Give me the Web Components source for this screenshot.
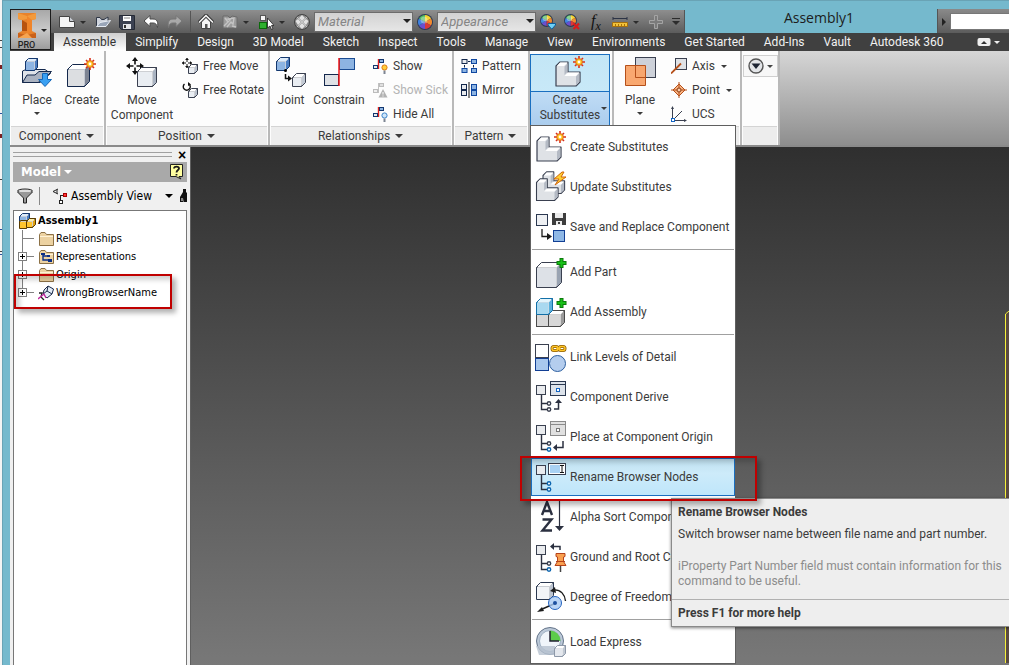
<!DOCTYPE html>
<html lang="en">
<head>
<meta charset="utf-8">
<title>Assembly1</title>
<style>
  html, body { margin: 0; height: 100%; overflow: hidden; }
  body { font: 12px/16px Roboto, "Open Sans", sans-serif; color: #3b3b3b; background: #f4f4f4; }
</style>
</head>
<body>
<cad-window></cad-window>

<script>
/* ---------- icon set ---------- */
const cube = (x, y, s, d, f = '#d9dce0', t = '#fff', r = '#9aa1ac', k = '#3a4050') =>
  `<g stroke="${k}" stroke-linejoin="round"><path fill="${t}" d="M${x} ${y + d}l${d} ${-d}h${s}l${-d} ${d}z"/><path fill="${r}" d="M${x + s} ${y + d}l${d} ${-d}v${s}l${-d} ${d}z"/><path fill="${f}" d="M${x} ${y + d}h${s}v${s}h${-s}z"/></g><path d="M${x + 1} ${y + d}h${s - 1}v${s - 1}M${x + s} ${y + d}l${d - 1} ${1 - d}" fill="none" stroke="#fff" stroke-opacity=".75"/>`;
const box = (x, y, w, h, f = '#e9ebee', k = '#3a4050') => `<rect x="${x}" y="${y}" width="${w}" height="${h}" fill="${f}" stroke="${k}"/>`;
const spark = (x, y) => `<g transform="translate(${x} ${y})"><path d="M0-6V6M-6 0H6M-4-4L4 4M-4 4L4-4" stroke="#d8301c" stroke-width="1.6"/><circle r="3.4" fill="#ffc81e" stroke="#e0641c"/><circle r="1.4" fill="#fff"/></g>`;
const ell = (x, y, s = 1) => `<g transform="translate(${x} ${y}) scale(${s})" stroke-linejoin="round"><path fill="#dfe2e6" stroke="#3a4050" stroke-width="1.2" d="M0 5L4 1H12V11L12 11H24V21L20 25H0z"/><path fill="#fff" d="M1 5L4 1.600H11.500L8 5zM8.500 15L12 11.600H23.300L20 15z"/><path fill="#b4bac4" d="M8.500 5.500L11.500 2.500V10.800L8.500 14zM20 15.500L23.400 12V21L20 24.400z"/></g>`;
const plus = `<path d="M26.500 2V12M21.500 7H31.500" stroke="#0b7a0b" stroke-width="4"/><path d="M26.500 3V11M22.500 7H30.500" stroke="#18c018" stroke-width="2"/>`;
const treeArms = (a = '#0d66b0', b = '#0d66b0') => `${box(1.5, 4.5, 9, 9)}<path d="M6.500 14V28.500H12M6.500 22.500H12" fill="none" stroke="#2b3040" stroke-width="1.4"/><circle cx="14" cy="22.500" r="1.700" fill="#fff" stroke="${a}" stroke-width="1.4"/><circle cx="14" cy="28.500" r="1.700" fill="#fff" stroke="${b}" stroke-width="1.4"/>`;
const wheel = (x, y, r) => {
  const c = ['#f6d32d', '#f28a2e', '#d93a3a', '#6a4fd0', '#3f83e0', '#4cb85c'];
  return `<circle cx="${x}" cy="${y}" r="${r + 1}" fill="#2c3a55"/>` + c.map((k, i) => {
    const a = (i * 60 - 90) * Math.PI / 180, b = a + Math.PI / 3;
    return `<path fill="${k}" d="M${x} ${y}L${(x + r * Math.cos(a)).toFixed(2)} ${(y + r * Math.sin(a)).toFixed(2)}A${r} ${r} 0 0 1 ${(x + r * Math.cos(b)).toFixed(2)} ${(y + r * Math.sin(b)).toFixed(2)}z"/>`;
  }).join('') + `<circle cx="${x - 1}" cy="${y - 2}" r="${r / 2}" fill="#fff" opacity=".35"/>`;
};
const blueCube = (x, y, s, d) => cube(x, y, s, d, '#8db4e2', '#dcebfa', '#4a7cc0', '#14386f');
const folder = `<path d="M1.500 14.500V3.500L3 1.500H7L8.500 3.500H15.500V14.500z" fill="#ecd2a2" stroke="#8c7146"/><path d="M2 5.500H15" stroke="#fff2d6"/>`;
const rel = (b) => `<path d="M6.500 1V11" stroke="#e0201c" stroke-width="1.4"/>${box(7.5, 1.5, 4, 3, '#8db4e2', '#14386f')}${box(1.5, 7.5, 4, 3, '#e9ebee', '#14386f')}${b}`;
const bulb = (c, k) => `<circle cx="12.500" cy="9.500" r="2.600" fill="${c}" stroke="${k}"/><path d="M12.500 12.500V16" stroke="#7d8592" stroke-width="2"/>`;
const ICONS = {
  logo: [26, 30, `<path d="M4 2H22V8L18 9V20L22 22V27H4V22L8 20V9L4 8z" fill="#e8822a"/><path d="M4 2L13 5 22 2V8L18 9 13 8 8 9 4 8z" fill="#f39a3c"/><path d="M8 9L13 12V20L8 20z" fill="#b8530f"/><path d="M13 5L18 9V20L13 23z" fill="#f0852a"/><path d="M4 22L13 24 22 22V27H4z" fill="#c9611a"/><path d="M4 27L13 22 18 27z" fill="#f7a550"/>`],
  new: [16, 16, `<path d="M.500 2.500H10.500L15.500 7.500V13.500H.500z" fill="#f4f4f4" stroke="#444"/><path d="M10.500 2.500V7.500H15.500" fill="#c8ccd2" stroke="#444"/>`],
  open: [16, 16, `<path d="M1.500 12.500V3.500H5L6.500 5.500H9L13 3V7" fill="#cfd4dc" stroke="#2f3746"/><path d="M1.500 12.500L5 8.500 15.500 6.500 11 12.500z" fill="#9aa6b8" stroke="#e8edf3"/>`],
  save: [16, 16, `<path d="M.500 1.500H15.500V15.500H2.500L.500 13.500z" fill="#3c4252" stroke="#252a35"/><path d="M4 2H12V7H4z" fill="#fff"/><path d="M4 10H12V15H4z" fill="#e4e6ea"/><path d="M5 11H7V14H5z" fill="#333"/><path d="M5 4H11" stroke="#888"/>`],
  undo: [16, 16, `<path d="M1 7L7 1.500V5H10C14 5 15.500 8 14.500 13.500 13.500 10 12.500 9 10 9H7V12.500z" fill="#fff" stroke="#4a4a4a"/>`],
  redo: [16, 16, `<path d="M15 7L9 1.500V5H6C2 5 .500 8 1.500 13.500 2.500 10 3.500 9 6 9H9V12.500z" fill="#a9a9a9" stroke="#777"/>`],
  home: [16, 16, `<path d="M3.500 8V14.500H12.500V8L8 3.500z" fill="#f4f4f4" stroke="#444"/><path d="M.500 8.500L8 1 15.500 8.500" fill="none" stroke="#3a3a3a" stroke-width="3"/><path d="M1 8.500L8 1.500 15 8.500" fill="none" stroke="#fff" stroke-width="1.4"/><path d="M7 10H9.500V14H7z" fill="#555"/>`],
  update: [16, 16, `<path d="M1 2H6L8 4 10 2 15 3V14H1z" fill="#9c9c9c" stroke="#6b6b6b"/><path d="M2 12L8 6 6 5 12 4 11 10 9 8 5 13M3 4L6 8M10 12L14 13" fill="none" stroke="#c4c4c4" stroke-width="1.400"/>`],
  select: [16, 16, `${box(2.5, 1.5, 5, 5, '#f4f4f4', '#555')}${box(1.500, 8.500, 7, 6, '#30b030', '#0a6a0a')}<path d="M9.500 4V14L12 12 13.500 15.500 15 15 13.500 11.500H16z" fill="#fff" stroke="#222" stroke-width=".800"/>`],
  sphere: [16, 16, `<circle cx="8" cy="8" r="7.500" fill="#8a8a8a" stroke="#444"/><path d="M8 1L11 4 8 7 5 4zM8 9L11 12 8 15 5 12zM1.500 7L4 5 7 8 4 11zM14.500 7L12 5 9 8 12 11z" fill="#e2e2e2"/><path d="M3 3L13 13M13 3L3 13" stroke="#c4c4c4"/>`],
  wheel: [16, 16, wheel(8, 8, 7)],
  wheeldown: [16, 16, wheel(6.5, 6.5, 5.5) + `<path d="M8 9.500H15.500V11L12 15H11.500L8 11z" fill="#6fd0f5" stroke="#0b5f9c"/>`],
  wheelx: [16, 16, wheel(6.5, 6.5, 5.5) + `<path d="M9.500 9.500L15 15M15 9.500L9.500 15" stroke="#d81b1b" stroke-width="2.200"/>`],
  ruler: [16, 16, `<path d="M1 3V6M15 3V6M1 4.500H15" stroke="#2c3345" fill="none"/><path d="M.500 8.500H15.500V12.500H.500z" fill="#f3c33a" stroke="#a8710c"/><path d="M3.500 10V12M6.500 10V12M9.500 10V12M12.500 10V12" stroke="#a8710c"/>`],
  cross: [16, 16, `<path d="M6.500 1.500H9.500V6.500H14.500V9.500H9.500V14.500H6.500V9.500H1.500V6.500H6.500z" fill="#7b7b7b" stroke="#a4a4a4"/>`],
  more: [8, 16, `<path d="M0 4.500H8" stroke="#2c2c2c"/><path d="M0 7H8L4 11z" fill="#2c2c2c"/>`],
  caret: [8, 16, `<path d="M1 7H7L4 10z" fill="currentColor"/>`],
  caretbig: [9, 16, `<path d="M0 6H8L4 10z" fill="currentColor"/>`],
  play: [6, 16, `<path d="M1 4L5 8 1 12z" fill="#222"/>`],
  ribmin: [14, 16, `<rect x=".500" y="4" width="13" height="8" rx="2" fill="#f0f0f0"/><path d="M4 10L7 7 10 10z" fill="#333"/>`],

  place: [32, 32, `<path d="M1.500 25.500V14L5 12.500H24L29.500 16.500 19 25.500z" fill="#dfe3e9" stroke="#14284c"/><path d="M1.500 25.500L6 18H14L18 14.500H30.500L22 23 17 25.500z" fill="#aab2c0" stroke="#14284c"/>${blueCube(4.5, 1.500, 9, 3)}<path d="M21.500 16.500H26.500V22.500H30.500L24 29.500 17.500 22.500H21.500z" fill="#3aa0f2" stroke="#1266b8"/>`],
  create: [32, 32, cube(1.5, 7.5, 17, 5, '#dcdee1', '#fff', '#7d8493', '#14284c') + spark(24, 7)],
  move: [32, 32, `<path d="M9 2V16M2 9H16" stroke="#111" stroke-width="1.6" stroke-dasharray="5.500 3"/><path d="M9 0L12 4H6zM9 18L6 14H12zM0 9L4 6V12zM18 9L14 12V6z" fill="#111"/>${cube(11.5, 10.5, 15, 4, '#e9edf2', '#fff', '#aab4c2', '#3a4050')}`],
  joint: [32, 32, blueCube(1.5, .5, 9, 4) + `<path d="M10.500 17V21.500H14" fill="none" stroke="#111" stroke-width="1.500"/><path d="M13 18.500L17 21.500 13 24.500z" fill="#111"/><circle cx="10.500" cy="13.500" r="1.500"/>${cube(17.5, 16.5, 9, 4, '#e9edf2', '#fff', '#c2c9d3', '#3a4050')}`],
  constrain: [32, 32, box(16.5, 1.5, 15, 11, '#8db4e2', '#1b4c93') + box(1.500, 17.500, 14, 11, '#dfe2e6', '#14284c') + `<path d="M16 1V29" stroke="#f01616" stroke-width="1.500"/>`],
  subst: [32, 32, ell(2, 5) + spark(25, 6)],
  plane: [32, 32, box(11.5, .5, 20, 20, '#cdd1d9', '#3a4050') + `<path d="M1.500 8.500H21.500V28.500H1.500z" fill="#f9a368" fill-opacity=".950" stroke="#b5501a"/><path d="M11.500 9V20.500H21" fill="none" stroke="#b5501a"/>`],
  freemove: [16, 16, `<path d="M5 0V10M0 5H10" stroke="#111" stroke-dasharray="4 2"/><path d="M3 2H7L5 0zM3 8H7L5 10zM2 3V7L0 5zM8 3V7L10 5z" fill="#111"/>${cube(6.5, 6.5, 6, 3, '#e9edf2', '#fff', '#b8c0cc')}`],
  freerotate: [16, 16, `<path d="M2.500 2A3.500 3.500 0 1 0 7 2" fill="none" stroke="#111" stroke-width="1.400"/><path d="M6 0L9 2.500 6 4z" fill="#111"/>${cube(6.5, 6.5, 6, 3, '#e9edf2', '#fff', '#b8c0cc')}`],
  show: [16, 16, rel(bulb('#ffce3a', '#e07a10'))],
  hide: [16, 16, rel(bulb('#cfe6fa', '#3d86cc'))],
  sick: [16, 16, `<g opacity=".9"><path d="M6.500 1V11" stroke="#bbb"/>${box(7.500, 1.500, 4, 3, '#ddd', '#b5b5b5')}${box(1.500, 7.500, 4, 3, '#eee', '#b5b5b5')}<path d="M11 7L15.500 15.500H6.500z" fill="#aaa"/><path d="M11 10V12.500M11 13.500V14.500" stroke="#fff"/></g>`],
  pattern: [16, 16, box(1, 1.5, 5, 4, '#e9ebee', '#14284c') + box(10.5, 1.5, 5, 4, '#8db4e2', '#0f47a0') + box(1, 10.5, 5, 4, '#8db4e2', '#0f47a0') + box(10.5, 10.5, 5, 4, '#8db4e2', '#0f47a0') + `<path d="M7 3.500H9.500M3.500 7V9.500M12.500 7V9.500" stroke="#14284c"/>`],
  mirror: [16, 16, box(.5, 2.5, 5, 5, '#e9ebee', '#14284c') + box(.5, 8.500, 5, 5, '#e9ebee', '#14284c') + box(10.5, 2.500, 5, 5, '#8db4e2', '#0f47a0') + box(10.5, 8.500, 5, 5, '#8db4e2', '#0f47a0') + `<path d="M8 0V16" stroke="#111"/>`],
  axis: [16, 16, box(4.5, .5, 11, 11, '#dfe2e6', '#3a4050') + `<path d="M0 15.500L10 5.500" stroke="#b5501a" stroke-width="1.800"/>`],
  point: [16, 16, `<path d="M8 2L14 8 8 14 2 8z" fill="#f9b483" stroke="#b5501a"/><path d="M8 0V16M0 8H16" stroke="#b5501a"/><circle cx="8" cy="8" r="2" fill="#f9d0b0" stroke="#8c3a10"/>`],
  ucs: [16, 16, `<path d="M1.500 1V14.500H15M1.500 14.500L11 5" fill="none" stroke="#3a4050"/><path d="M0 3L1.500 0 3 3zM13 13L16 14.500 13 16z" fill="#3a4050"/><rect x=".500" y="12.500" width="3" height="3" fill="#fff" stroke="#1566c4"/>`],
  disc: [16, 16, `<circle cx="8" cy="8" r="7" fill="#e3e5e8" stroke="#555" stroke-width="1.400"/><path d="M3.500 5.500H12.500L8 11z" fill="#1d2433"/>`],

  updsub: [32, 32, ell(8, 0, .9) + ell(1.5, 7, .9) + `<path d="M27 1L19 8H24L20 14 31 6H26L29 1z" fill="#ffcf30" stroke="#d0650c"/>`],
  savrep: [32, 32, box(1.5, 3.5, 11, 11, '#eef0f3', '#2b3850') + `<path d="M17 2H31V14H17z" fill="#3d3d3d"/><path d="M20 2H28V7H20zM21 10H27V14H21z" fill="#ececec"/><path d="M23 11H25V13H23z" fill="#3d3d3d"/><path d="M7 18V25.500H14" fill="none" stroke="#1c1c1c" stroke-width="1.300"/><path d="M12 22L17 25.500 12 29z" fill="#1c1c1c"/>${box(18.5, 19.500, 11, 11, '#8fb8e6', '#123f94')}`],
  addpart: [32, 32, cube(1.5, 6.5, 20, 5, '#dde1e7', '#fff', '#99a3b2') + plus],
  addasm: [32, 32, box(1.5, 18.5, 12, 12, '#d8d8d8', '#4a4a4a') + cube(13.500, 14.500, 12, 4, '#d8d8d8', '#fff', '#9b9b9b', '#4a4a4a') + cube(1.5, 2.500, 12, 4, '#a9d9f0', '#e4f5fc', '#5bb0dc', '#1370a8') + plus],
  lod: [32, 32, box(.5, 3.500, 13, 13, '#fff', '#3a4050') + box(.5, 17.500, 13, 12, '#a9c8ee', '#123f94') + `<circle cx="22.500" cy="22.500" r="8" fill="#b4cdee" stroke="#2d5f9f"/><g fill="none" stroke="#8f5d00" stroke-width="3"><rect x="17" y="5.500" width="6" height="4" rx="2"/><rect x="24" y="5.500" width="6" height="4" rx="2"/></g><g fill="none" stroke="#ffc629" stroke-width="1.400"><rect x="17" y="5.500" width="6" height="4" rx="2"/><rect x="24" y="5.500" width="6" height="4" rx="2"/><path d="M21 7.500H26"/></g>`],
  derive: [32, 32, treeArms('#3a4050', '#3a4050') + box(15.5, .500, 15, 14, '#dce2ea', '#2b3850') + `<path d="M15.500 3.500H30.500" stroke="#2b3850"/><rect x="21.500" y="7.500" width="3" height="3" fill="#fff" stroke="#1566c4"/><path d="M19 28H23.500V21" fill="none" stroke="#2b3040" stroke-width="1.500"/><path d="M20 22L23.500 18 27 22z" fill="#2b3040"/>`],
  origin: [32, 32, treeArms('#3a4050') + box(15.5, .500, 15, 14, '#e0e0e0', '#8a8a8a') + `<path d="M15.500 3.500H30.500" stroke="#8a8a8a"/><rect x="21.500" y="7.500" width="3" height="3" fill="#fff" stroke="#777"/><path d="M28 20V26.500H21" fill="none" stroke="#2b3040" stroke-width="1.500"/><path d="M22 23L18 26.500 22 30z" fill="#2b3040"/>`],
  rename: [32, 32, treeArms() + box(13.5, 2.500, 17, 11, '#fff', '#3a4050') + `<path d="M15 4H25V12H15z" fill="#a9d2f4"/><path d="M25 4.500H29M27 4.500V11.500M25 11.500H29" stroke="#111"/>`],
  sort: [32, 32, `<path d="M7 14L12 1 17 14M9 10H15" fill="none" stroke="#2b3040" stroke-width="2.400"/><path d="M7.500 18.500H16.500L7.500 29.500H17" fill="none" stroke="#2b3040" stroke-width="2.400"/><path d="M24.500 0V26" stroke="#2b3040" stroke-width="1.200"/><path d="M20 25H29L24.500 30z" fill="#2b3040"/>`],
  ground: [32, 32, treeArms('#3a4050') + `<path d="M25 9V5.500H18" fill="none" stroke="#2b3040" stroke-width="1.500"/><path d="M19 2L15 5.500 19 9z" fill="#2b3040"/><path d="M21 12.500H30V15.500L28.500 16V20.500L31 24.500H20L22.500 20.500V16L21 15.500z" fill="#f9a050" stroke="#b5421a"/><path d="M21 20.500H30" stroke="#b5421a"/><path d="M25.500 25V31" stroke="#444" stroke-width="1.500"/>`],
  dof: [32, 32, cube(1.500, 1.500, 13, 4, '#f2f4f7', '#fff', '#bcc4d0', '#2b3850') + `<path d="M18 9C26 8 30 14 30.500 20M21 22L5 29" fill="none" stroke="#1c1c1c" stroke-width="1.400"/><path d="M20 6L15 10 21 12zM7 26L2 31 9 30z" fill="#1c1c1c"/><circle cx="20" cy="22" r="6.500" fill="#a9cbf4" fill-opacity=".8" stroke="#2463c0"/><circle cx="20" cy="22" r="2" fill="#1c50a0"/>`],
  express: [32, 32, `<circle cx="15" cy="15" r="13.500" fill="#bcc9d8" stroke="#64748a"/><circle cx="15" cy="15" r="10.500" fill="#f0f5fa" stroke="#9fb0c3"/><path d="M15 15V4.500A10.500 10.500 0 0 1 25.500 15z" fill="#5ccc4a"/><path d="M15 5V15H24" fill="none" stroke="#223" stroke-width="1.500"/><path d="M1 20H20V29H4z" fill="#b7c2cf" opacity=".8"/>${cube(19.500, 19.500, 8, 3, '#e4e8ee', '#fff', '#c0c8d2', '#8d98a8')}`],

  help: [14, 16, `<path d="M.500 .500H12.500V12.500H9L11 15 6 12.500H.500z" fill="#ffffa0" stroke="#222"/><path d="M4 4.500C4 2 9 2 9 4.500 9 6 6.500 6 6.500 8.500M6.500 10V11.500" fill="none" stroke="#1a1a1a" stroke-width="1.800"/>`],
  funnel: [16, 16, `<ellipse cx="8" cy="3" rx="7.500" ry="2" fill="#ddd" stroke="#222"/><path d="M.500 4L6.500 10V15H9.500V10L15.500 4" fill="#999" stroke="#222"/>`],
  view: [16, 16, `<path d="M6 1L1 3.500 6 6M5 1.500V5.500" fill="none" stroke="#222"/><path d="M9 7.500H14M8.500 7V14" stroke="#222" fill="none"/>${box(11.500, 5.500, 3, 3, '#f33', '#a00')}${box(7.500, 12.500, 3, 3, '#fff', '#222')}`],
  binoc: [7, 16, `<path d="M6 1V4L7 5V14H4V10L3.500 14H0V9L3 4V1z" fill="#111"/><path d="M2 10V13" stroke="#fff"/>`],
  asm: [18, 18, blueCube(1.500, 1.500, 7, 3) + cube(1.500, 8.500, 7, 1, '#ffc52e', '#ffe08a', '#e0a010', '#5a3c00') + cube(8.500, 6.500, 6, 3, '#ffc52e', '#fff0a8', '#e0a010', '#5a3c00')],
  folder: [17, 16, folder],
  reps: [17, 16, folder + `<path d="M5 4V11H10M5 7H9" fill="none" stroke="#0b2f86" stroke-width="1.400"/><path d="M3 4H7V6H3zM9 6H12V8H9zM10 10H14V13H10z" fill="#0b2f86"/>`],
  part: [17, 16, `<path d="M6 5L10 1 15.500 4 14 9 9 13 5 9z" fill="#e3ecf6" stroke="#1b2a4a"/><path d="M10 1L9 6 14 9M9 6L5 9" fill="none" stroke="#1b2a4a"/><path d="M1 8H4L3 12 6 15" fill="none" stroke="#222" stroke-width="1.300"/><path d="M0 14L6 9 8 13" fill="none" stroke="#c22aa0" stroke-width="1.400"/>`],
};

const define = (name, html, setup) => {
  const tpl = document.createElement('template');
  tpl.innerHTML = html;
  customElements.define(name, class extends HTMLElement {
    constructor() {
      super();
      this.attachShadow({ mode: 'open' }).append(tpl.content.cloneNode(true));
    }
    connectedCallback() { if (setup) setup(this, this.shadowRoot); }
  });
};
const BTN = `button { font: inherit; color: inherit; background: none; border: 0; padding: 0; margin: 0; }`;

define('cad-icon', `<style>:host { display: block; flex: none; } svg { display: block; }</style>`, (el, root) => {
  const [w, h, body] = ICONS[el.getAttribute('name')];
  if (!root.querySelector('svg'))
    root.innerHTML += `<svg width="${w}" height="${h}" viewBox="0 0 ${w} ${h}" fill="#000" aria-hidden="true">${body}</svg>`;
});

define('quick-button', `<style>:host { display: block; flex: none; } ${BTN} button { display: flex; gap: 4px; color: #2c2c2c; }</style>
  <button><slot></slot></button>`, (el, root) => root.querySelector('button').setAttribute('aria-label', el.getAttribute('label')));

define('quick-select', `<style>
  :host { display: flex; position: relative; flex: none; width: 99px; color: #222; }
  select { appearance: none; width: 100%; height: 20px; margin: 0; padding: 0 3px; border: 1px solid #6c6c6c; border-radius: 0; background: linear-gradient(#d2d2d2, #e6e6e6); font: italic 13px/16px Roboto, "Open Sans", sans-serif; color: #858585; }
  cad-icon { position: absolute; right: 1px; top: 1px; pointer-events: none; }
  </style><select></select><cad-icon name="caretbig"></cad-icon>`, (el, root) => {
  const s = root.querySelector('select'), t = el.getAttribute('label');
  s.setAttribute('aria-label', t); s.innerHTML = `<option>${t}</option>`;
});

define('quick-toolbar', `<style>
  :host { display: flex; align-items: center; gap: 8px; flex: none; height: 23px; padding: 0 4px 0 8px; background: linear-gradient(#8e8e8e, #5c5c5c); border-right: 1px solid #555; box-sizing: border-box; }
  .rule { width: 1px; height: 21px; margin: 0 -1px; background: #555; }
  .looks { display: flex; align-items: center; gap: 4px; }
  .fx { font: italic 16px/16px "Liberation Serif", serif; width: 16px; color: #111; } .fx sub { font-size: 12px; line-height: 8px; }
  </style>
  <quick-button label="New"><cad-icon name="new"></cad-icon><cad-icon name="caret"></cad-icon></quick-button>
  <quick-button label="Open"><cad-icon name="open"></cad-icon></quick-button>
  <quick-button label="Save"><cad-icon name="save"></cad-icon></quick-button>
  <quick-button label="Undo"><cad-icon name="undo"></cad-icon></quick-button>
  <quick-button label="Redo"><cad-icon name="redo"></cad-icon></quick-button>
  <span class="rule"></span>
  <quick-button label="Home"><cad-icon name="home"></cad-icon></quick-button>
  <quick-button label="Update"><cad-icon name="update"></cad-icon><cad-icon name="caret"></cad-icon></quick-button>
  <quick-button label="Select"><cad-icon name="select"></cad-icon><cad-icon name="caret"></cad-icon></quick-button>
  <div class="looks">
    <quick-button label="Materials"><cad-icon name="sphere"></cad-icon></quick-button>
    <quick-select label="Material"></quick-select>
    <quick-button label="Appearances"><cad-icon name="wheel"></cad-icon></quick-button>
    <quick-select label="Appearance"></quick-select>
    <quick-button label="Adjust"><cad-icon name="wheeldown"></cad-icon></quick-button>
  </div>
  <quick-button label="Clear"><cad-icon name="wheelx"></cad-icon></quick-button>
  <quick-button label="Parameters"><span class="fx">f<sub>x</sub></span></quick-button>
  <quick-button label="Measure"><cad-icon name="ruler"></cad-icon><cad-icon name="caret"></cad-icon></quick-button>
  <quick-button label="Add"><cad-icon name="cross"></cad-icon></quick-button>
  <quick-button label="Customize"><cad-icon name="more"></cad-icon></quick-button>`);

define('ribbon-tab', `<style>
  :host { display: block; flex: none; } ${BTN}
  button { display: block; height: 18px; padding: 0 10px 0 9px; color: #f2f2f2; line-height: 17px; white-space: nowrap; }
  :host([active]) button { background: linear-gradient(#cfcfcf, #fff); color: #333; }
  </style><button role="tab"><slot></slot></button>`);

define('ribbon-panel', `<style>
  :host { display: flex; flex-direction: column; box-sizing: border-box; flex: none; position: relative; width: var(--w); border-right: 2px solid #b9b9b9; background: #fdfdfd; }
  .body { flex: 1; display: flex; align-items: flex-start; padding: 3px 0 0 var(--pad, 0); }
  footer { display: flex; height: 19px; align-items: center; justify-content: center; gap: 5px; margin: 0 1px; padding-bottom: 1px; border-top: 1px solid #d4d4d4; background: #ededed; color: #3b3b3b; box-sizing: border-box; }
  </style><div class="body"><slot></slot></div><footer><slot name="title"></slot></footer>`);

define('big-tool', `<style>
  :host { display: block; flex: none; width: var(--bw, 46px); } ${BTN}
  button { display: flex; flex-direction: column; align-items: center; width: 100%; line-height: 15px; color: #3b3b3b; }
  .ico { padding: 3px 0 4px; }
  .lab { display: flex; flex-direction: column; align-items: center; white-space: nowrap; }
  </style><button><span class="ico"><slot name="icon"></slot></span><span class="lab"><slot></slot></span></button>`);

define('small-tool', `<style>
  :host { display: block; } ${BTN}
  button { display: flex; align-items: center; gap: 5px; height: 24px; white-space: nowrap; color: #3b3b3b; }
  :host([disabled]) button { color: #b4b4b4; }
  </style><button><slot></slot></button>`, (el, root) => { root.querySelector('button').disabled = el.hasAttribute('disabled'); });

define('menu-item', `<style>
  :host { display: block; position: relative; } ${BTN}
  button { display: flex; align-items: center; gap: 3px; width: 100%; height: 40px; padding: 0 0 0 4px; white-space: nowrap; color: #3b3b3b; box-sizing: border-box; text-align: left; }
  :host([selected]) { z-index: 1; }
  :host([selected]) button { height: 38px; margin: 1px 0; padding: 0 0 0 3px; border: 1px solid #1a6fc0; background: linear-gradient(#bfe0f0, #cdebfa 40%, #bfe6fa); }
  </style><button role="menuitem"><slot></slot></button><slot name="over"></slot>`);

define('menu-rule', `<style>:host { display: block; height: 5px; } hr { margin: 0 1px; border: 0; height: 2px; border-bottom: 1px solid #a0a0a0; }</style><hr>`);

define('call-out', `<style>:host { position: absolute; box-sizing: border-box; border: 2px solid #c00000; box-shadow: 4px 4px 5px rgba(0,0,0,.3), inset 4px 4px 5px rgba(0,0,0,.18); pointer-events: none; z-index: 3; }</style>`);

define('help-tip', `<style>
  :host { position: absolute; display: block; z-index: 2; box-sizing: border-box; width: 340px; background: #eeeeee; border: 1px solid #8a8a8a; box-shadow: 0 1px 3px rgba(0,0,0,.5); color: #3b3b3b; }
  section { padding: 5px 6px 10px; } h3, p { margin: 0; font-size: 12px; line-height: 16px; } h3 { margin-bottom: 6px; }
  .note { margin-top: 17px; color: #8c8c8c; line-height: 15px; white-space: nowrap; } .main { white-space: nowrap; }
  footer { border-top: 1px solid #b0b0b0; padding: 5px 6px; font-weight: 700; }
  </style><section><h3><slot name="title"></slot></h3><p class="main"><slot></slot></p><p class="note"><slot name="note"></slot></p></section><footer><slot name="foot"></slot></footer>`);

define('substitutes-menu', `<style>
  :host { display: block; position: absolute; left: 0; top: 74px; z-index: 2; width: 206px; box-sizing: border-box; background: #fff; border: 1px solid #5f5f5f; padding: 1px 0; }
  help-tip { left: 140px; top: 40px; } call-out { left: -11px; top: -2px; width: 237px; height: 45px; }
  </style>
  <menu-item><cad-icon name="subst"></cad-icon>Create Substitutes</menu-item>
  <menu-item><cad-icon name="updsub"></cad-icon>Update Substitutes</menu-item>
  <menu-item><cad-icon name="savrep"></cad-icon>Save and Replace Component</menu-item>
  <menu-rule></menu-rule>
  <menu-item><cad-icon name="addpart"></cad-icon>Add Part</menu-item>
  <menu-item><cad-icon name="addasm"></cad-icon>Add Assembly</menu-item>
  <menu-rule></menu-rule>
  <menu-item><cad-icon name="lod"></cad-icon>Link Levels of Detail</menu-item>
  <menu-item><cad-icon name="derive"></cad-icon>Component Derive</menu-item>
  <menu-item><cad-icon name="origin"></cad-icon>Place at Component Origin</menu-item>
  <menu-item selected><cad-icon name="rename"></cad-icon>Rename Browser Nodes
    <call-out slot="over"></call-out>
    <help-tip slot="over"><span slot="title">Rename Browser Nodes</span>Switch browser name between file name and part number.<span slot="note">iProperty Part Number field must contain information for this<br>command to be useful.</span><span slot="foot">Press F1 for more help</span></help-tip>
  </menu-item>
  <menu-item><cad-icon name="sort"></cad-icon>Alpha Sort Component</menu-item>
  <menu-item><cad-icon name="ground"></cad-icon>Ground and Root Component</menu-item>
  <menu-item><cad-icon name="dof"></cad-icon>Degree of Freedom</menu-item>
  <menu-rule></menu-rule>
  <menu-item><cad-icon name="express"></cad-icon>Load Express</menu-item>`);

define('cad-ribbon', `<style>
  :host { display: flex; height: 94px; background: linear-gradient(#d6d6d6, #8e8e8e); border-bottom: 2px solid #8a8a8a; }
  .col { display: flex; flex-direction: column; padding-left: var(--lead, 0); } .caretrow { height: 16px; margin-top: -3px; }
  .gallery { font: inherit; display: flex; align-items: center; gap: 2px; height: 22px; padding: 0 3px 0 4px; margin-top: 1px; background: #f7f7f7; border: 1px solid #cfcfcf; color: #444; }
  .drop { font: inherit; line-height: 15px; color: #3b3b3b; padding: 0; display: flex; flex-direction: column; align-items: center; width: 80px; height: 71px; border: 1px solid #1a6fc0; border-bottom: 0; background: linear-gradient(#c3e6f6, #cdebf9); position: relative; box-sizing: border-box; }
  .drop .top { height: 36px; padding-top: 1px; box-sizing: border-box; } .drop .txt { width: 100%; flex: 1; padding-top: 1px; border-top: 1px solid #1a6fc0; background: linear-gradient(#c0dcf5, #abcdee); }
  .drop .car { position: absolute; right: 1px; bottom: 9px; }
  </style>
  <ribbon-panel style="--w:96px;--pad:4px">
    <big-tool><cad-icon slot="icon" name="place"></cad-icon>Place<cad-icon name="caret" class="caretrow"></cad-icon></big-tool>
    <big-tool style="--bw:44px"><cad-icon slot="icon" name="create"></cad-icon>Create</big-tool>
    <span slot="title">Component</span><cad-icon slot="title" name="caretbig"></cad-icon>
  </ribbon-panel>
  <ribbon-panel style="--w:164px;--pad:2px">
    <big-tool style="--bw:68px"><cad-icon slot="icon" name="move"></cad-icon><span>Move</span><span>Component</span></big-tool>
    <div class="col" style="--lead:6px">
      <small-tool><cad-icon name="freemove"></cad-icon>Free Move</small-tool>
      <small-tool><cad-icon name="freerotate"></cad-icon>Free Rotate</small-tool>
    </div>
    <span slot="title">Position</span><cad-icon slot="title" name="caretbig"></cad-icon>
  </ribbon-panel>
  <ribbon-panel style="--w:184px">
    <big-tool style="--bw:42px"><cad-icon slot="icon" name="joint"></cad-icon>Joint</big-tool>
    <big-tool style="--bw:54px"><cad-icon slot="icon" name="constrain"></cad-icon>Constrain</big-tool>
    <div class="col" style="--lead:6px">
      <small-tool><cad-icon name="show"></cad-icon>Show</small-tool>
      <small-tool disabled><cad-icon name="sick"></cad-icon>Show Sick</small-tool>
      <small-tool><cad-icon name="hide"></cad-icon>Hide All</small-tool>
    </div>
    <span slot="title">Relationships</span><cad-icon slot="title" name="caretbig"></cad-icon>
  </ribbon-panel>
  <ribbon-panel style="--w:76px;--pad:7px">
    <div class="col">
      <small-tool><cad-icon name="pattern"></cad-icon>Pattern</small-tool>
      <small-tool><cad-icon name="mirror"></cad-icon>Mirror</small-tool>
    </div>
    <span slot="title">Pattern</span><cad-icon slot="title" name="caretbig"></cad-icon>
  </ribbon-panel>
  <ribbon-panel style="--w:84px;z-index:2">
    <button class="drop"><span class="top"><cad-icon name="subst"></cad-icon></span><span class="txt">Create<br>Substitutes</span><cad-icon name="caret" class="car"></cad-icon></button>
    <substitutes-menu></substitutes-menu>
  </ribbon-panel>
  <ribbon-panel style="--w:128px;--pad:3px">
    <big-tool><cad-icon slot="icon" name="plane"></cad-icon>Plane<cad-icon name="caret" class="caretrow"></cad-icon></big-tool>
    <div class="col" style="--lead:8px">
      <small-tool><cad-icon name="axis"></cad-icon>Axis<cad-icon name="caret"></cad-icon></small-tool>
      <small-tool><cad-icon name="point"></cad-icon>Point<cad-icon name="caret"></cad-icon></small-tool>
      <small-tool><cad-icon name="ucs"></cad-icon>UCS</small-tool>
    </div>
  </ribbon-panel>
  <ribbon-panel style="--w:38px;--pad:1px">
    <button class="gallery" aria-label="More panels"><cad-icon name="disc"></cad-icon><cad-icon name="caret"></cad-icon></button>
  </ribbon-panel>`);

define('cad-header', `<style>
  :host { display: grid; grid-template: 8px 24px 18px / 44px 1fr; background: #75b9cd; } ${BTN}
  .app { grid-row: 2 / 4; grid-column: 1; width: 41px; margin-bottom: 1px; border: 1px solid #1c1c1c; background: linear-gradient(#a8a8a8, #c9c9c9 50%, #9c9c9c); display: flex; align-items: center; justify-content: center; position: relative; z-index: 1; color: #222; box-sizing: border-box; }
  .mark { display: flex; flex-direction: column; align-items: center; font-size: 9px; line-height: 8px; font-weight: 500; }
  .bar { grid-row: 2; grid-column: 2; display: flex; align-items: flex-start; margin-left: -3px; }
  quick-toolbar { margin-top: 1px; }
  h1 { flex: 1; margin: 0; font: 400 14px/18px "Open Sans", sans-serif; color: #1c1c1c; text-align: center; padding-left: 16px; }
  .search { display: flex; align-items: center; width: 72px; height: 24px; box-sizing: border-box; padding: 1px 0 0 3px; gap: 3px; background: linear-gradient(#8a8a8a, #5c5c5c); overflow: hidden; border-left: 1px solid #555; }
  input { flex: 1; min-width: 0; height: 17px; border: 1px solid #777; border-right: 0; background: #fff; padding: 0; box-sizing: border-box; }
  .tabs { grid-row: 3; grid-column: 1 / 3; background: #404040; display: flex; padding-left: 44px; }
  .end { margin-left: auto; display: flex; align-items: center; gap: 2px; padding-right: 8px; color: #eee; }
  </style>
  <button class="app" aria-label="Application menu"><span class="mark"><cad-icon name="logo"></cad-icon>PRO</span><cad-icon name="caret"></cad-icon></button>
  <div class="bar"><quick-toolbar></quick-toolbar><h1>Assembly1</h1>
    <div class="search"><cad-icon name="play"></cad-icon><input type="text" aria-label="Search"></div></div>
  <div class="tabs" role="tablist">
    <ribbon-tab active>Assemble</ribbon-tab><ribbon-tab>Simplify</ribbon-tab><ribbon-tab>Design</ribbon-tab><ribbon-tab>3D Model</ribbon-tab><ribbon-tab>Sketch</ribbon-tab><ribbon-tab>Inspect</ribbon-tab><ribbon-tab>Tools</ribbon-tab><ribbon-tab>Manage</ribbon-tab><ribbon-tab>View</ribbon-tab><ribbon-tab>Environments</ribbon-tab><ribbon-tab>Get Started</ribbon-tab><ribbon-tab>Add-Ins</ribbon-tab><ribbon-tab>Vault</ribbon-tab><ribbon-tab>Autodesk 360</ribbon-tab>
    <span class="end"><cad-icon name="ribmin"></cad-icon><cad-icon name="caret"></cad-icon></span>
  </div>`);

define('tree-node', `<style>
  :host { display: flex; align-items: center; height: 18px; gap: 1px; color: #000; white-space: nowrap; }
  .arm { width: 19px; height: 18px; flex: none; } .arm svg { display: block; }
  :host([root]) .arm { display: none; } :host([root]) { font-weight: 700; gap: 2px; }
  </style><span class="arm"></span><slot></slot>`, (el, root) => {
  const more = el.hasAttribute('expandable'), end = el.hasAttribute('last') ? 9 : 18;
  root.querySelector('.arm').innerHTML = `<svg width="19" height="18" viewBox="0 0 19 18" fill="none" stroke="#808080"><path d="M4.500 0V${end}M5 8.500H16"/>${more ? '<rect x=".500" y="4.500" width="8" height="8" fill="#fff"/><path d="M2 8.500H7M4.500 6V11" stroke="#000"/>' : ''}</svg>`;
});

define('model-browser', `<style>
  :host { display: flex; flex-direction: column; width: 181px; box-sizing: border-box; flex: none; background: #f0f0f0; border-right: 1px solid #5f5f5f; padding: 0 3px; font: 11px/14px "DejaVu Sans Condensed", "DejaVu Sans", sans-serif; position: relative; color: #000; } ${BTN}
  .grip { display: flex; align-items: center; height: 15px; gap: 5px; } .grip i { flex: 1; height: 3px; border: solid #a0a0a0; border-width: 1px 0; }
  .close { font: 700 14px/14px "Liberation Sans", sans-serif; width: 10px; }
  .head { display: flex; align-items: center; gap: 3px; height: 20px; padding: 0 3px 0 8px; background: #a9a9a9; color: #fff; font-size: 13px; font-weight: 700; }
  .head button:last-child { margin-left: auto; }
  .head button, .tools button { display: flex; align-items: center; gap: 3px; }
  .tools { display: flex; align-items: center; height: 28px; padding-left: 4px; gap: 6px; font-size: 12px; white-space: nowrap; overflow: hidden; }
  .tools i { width: 1px; height: 18px; background: #888; margin-right: 6px; }
  .tools .car { margin-left: auto; } .tree { flex: 1; border: 1px solid #777; border-bottom: 0; background: #fff; padding: 1px 0 0 4px; }
  call-out { left: 4px; top: 127px; width: 158px; height: 35px; }
  </style>
  <div class="grip"><i></i><button class="close" aria-label="Close">×</button></div>
  <div class="head"><button>Model<cad-icon name="caretbig"></cad-icon></button><button aria-label="Help"><cad-icon name="help"></cad-icon></button></div>
  <div class="tools"><button aria-label="Filter"><cad-icon name="funnel"></cad-icon></button><i></i><button><cad-icon name="view"></cad-icon>Assembly View</button><cad-icon class="car" name="caretbig"></cad-icon><button aria-label="Find"><cad-icon name="binoc"></cad-icon></button></div>
  <div class="tree" role="tree">
    <tree-node root><cad-icon name="asm"></cad-icon>Assembly1</tree-node>
    <tree-node><cad-icon name="folder"></cad-icon>Relationships</tree-node>
    <tree-node expandable><cad-icon name="reps"></cad-icon>Representations</tree-node>
    <tree-node expandable><cad-icon name="folder"></cad-icon>Origin</tree-node>
    <tree-node expandable last><cad-icon name="part"></cad-icon>WrongBrowserName</tree-node>
  </div>
  <call-out></call-out>`);

define('model-view', `<style>
  :host { display: block; flex: 1; position: relative; background: linear-gradient(#2f2f2f, #787878); }
  svg { position: absolute; right: 0; top: 164px; height: 352px; }
  </style><svg width="4" height="352" viewBox="0 0 4 352"><path d="M.500 352V3L4 0V352" fill="#5a4a42"/><path d="M.500 352V3L4 0" fill="none" stroke="#f5f03a"/></svg>`);

define('cad-window', `<style>
  :host { display: flex; height: 100vh; padding-top: 1px; box-sizing: border-box; overflow: hidden; background: #f4f4f4; }
  .behind { flex: none; width: 2px; }
  .frame { flex: 1; min-width: 0; display: flex; flex-direction: column; margin-left: 1px; border-left: 7px solid #75b9cd; box-shadow: 0 0 0 1px #69a3b5; }
  .work { flex: 1; display: flex; min-height: 0; }
  </style>
  <svg class="behind" width="2" height="300" viewBox="0 0 2 300" aria-hidden="true"><path d="M0 39.500H2M0 46.500H2M0 178.500H2M0 250.500H2" stroke="#444"/><path d="M0 66H2M0 135H2" stroke="#7a2020" stroke-width="4"/><path d="M0 112.500H2M0 228.500H2M0 253.500H2" stroke="#2b4f9c"/></svg>
  <div class="frame"><cad-header></cad-header><cad-ribbon></cad-ribbon><div class="work"><model-browser></model-browser><model-view></model-view></div></div>`);
</script>
</body>
</html>
